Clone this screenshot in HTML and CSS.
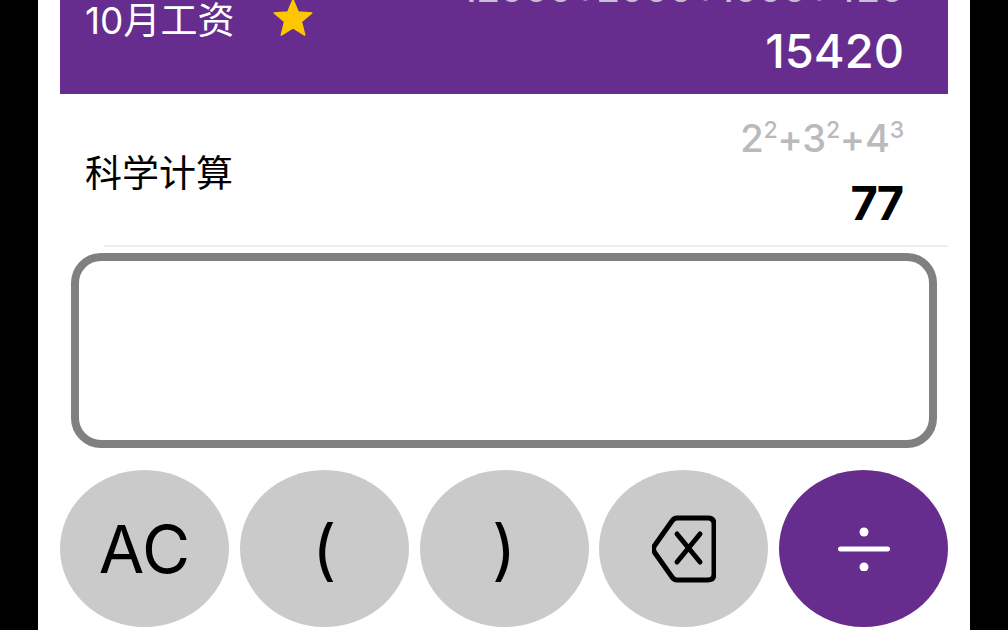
FILE: index.html
```html
<!DOCTYPE html>
<html lang="zh">

<head>
    <meta name="viewport" content="width=device-width, initial-scale=1.0">
    <meta charset="utf-8">
    <title>计算器</title>
    <link rel="stylesheet" href="styles.css">
</head>

<body>
    <div class="phone">
        <div class="record record--active">
            <div class="record__name">
                <span>10月工资</span>
                <svg class="record__star" viewBox="0 0 40 40" width="40" height="40">
                    <path d="M20 1.5 L25.2 14 L38.8 15 L28.4 23.8 L31.7 37 L20 29.9 L8.3 37 L11.6 23.8 L1.2 15 L14.8 14 Z" fill="#fdc700" stroke="#fdc700" stroke-width="1.5" stroke-linejoin="round" />
                </svg>
            </div>
            <div class="record__values">
                <div class="record__formula">12000+2000+1000+420</div>
                <div class="record__result">15420</div>
            </div>
        </div>
        <div class="record">
            <div class="record__name">
                <span>科学计算</span>
            </div>
            <div class="record__values">
                <div class="record__formula">2<sup>2</sup>+3<sup>2</sup>+4<sup>3</sup></div>
                <div class="record__result record__result--bold">77</div>
            </div>
        </div>
        <div class="display"></div>
        <div class="keys">
            <div class="key">AC</div>
            <div class="key">(</div>
            <div class="key">)</div>
            <div class="key">
                <svg viewBox="0 0 64 68" width="64" height="68" fill="none" stroke="#000" stroke-width="5" stroke-linecap="round" stroke-linejoin="round">
                    <path d="M25 3 H56 Q62 3 62 9 V59 Q62 65 56 65 H25 Q22 65 20 62 L3 38 Q0 34 3 30 L20 6 Q22 3 25 3 Z" />
                    <path d="M25 19 L48 47 M48 19 L25 47" />
                </svg>
            </div>
            <div class="key key--operator">
                <svg viewBox="0 0 52 44" width="52" height="44" fill="#fff">
                    <circle cx="26" cy="5" r="4.500" />
                    <rect x="0" y="19.500" width="52" height="5" rx="2.500" />
                    <circle cx="26" cy="40" r="4.500" />
                </svg>
            </div>
        </div>
    </div>
</body>

</html>
```
FILE: styles.css
```css
body {
    --color-primary: #662d8f;
    margin: 0;
    height: 630px;
    overflow: hidden;
    background: #000000;
    font-family: "Inter", "Noto Sans CJK SC", sans-serif;
}

.phone {
    width: 888px;
    height: 630px;
    margin: 0 38px;
    padding: 0 22px;
    overflow: hidden;
    background: #ffffff;
}

.record {
    position: relative;
    display: flex;
    justify-content: space-between;
    box-sizing: border-box;
    height: 153px;
    padding: 0 44px 0 25px;
    color: #000000;
}

.record::after {
    content: "";
    position: absolute;
    left: 44px;
    right: 0;
    bottom: 0;
    height: 2px;
    background: #eeeeee;
}

/* the list is scrolled, so the first record starts above the window */
.record--active {
    height: 152px;
    margin-top: -58px;
    color: #ffffff;
    background: var(--color-primary);
}

.record--active::after {
    display: none;
}

.record__name {
    display: flex;
    align-items: center;
    gap: 39px;
    height: 100%;
    font-size: 37px;
}

.record__star {
    flex: none;
}

.record__values {
    display: flex;
    flex-direction: column;
    align-items: flex-end;
    padding-top: 21px;
}

.record--active .record__values {
    padding-top: 23px;
}

.record__formula {
    height: 47px;
    line-height: 47px;
    font-size: 38px;
    font-weight: 500;
    letter-spacing: -0.2px;
    color: #b9b9be;
}

.record__formula sup {
    font-size: 23px;
    line-height: 0;
    vertical-align: 14px;
}

.record--active .record__formula {
    color: #c8bdd3;
}

.record__result {
    margin-top: 17px;
    line-height: 47px;
    font-size: 47px;
    font-weight: 500;
}

.record--active .record__result {
    margin-top: 15px;
}

.record__result--bold {
    margin-right: 2px;
    font-weight: 700;
    letter-spacing: -2px;
}

.display {
    box-sizing: border-box;
    height: 195px;
    margin: 6px 11px 0;
    border: 8px solid #808080;
    border-radius: 30px;
}

.keys {
    display: flex;
    justify-content: space-between;
    margin-top: 22px;
}

.key {
    display: flex;
    align-items: center;
    justify-content: center;
    width: 169px;
    height: 157px;
    border-radius: 50%;
    font-size: 66px;
    color: #000000;
    background: #cacaca;
}

.key--operator {
    background: var(--color-primary);
}
```
